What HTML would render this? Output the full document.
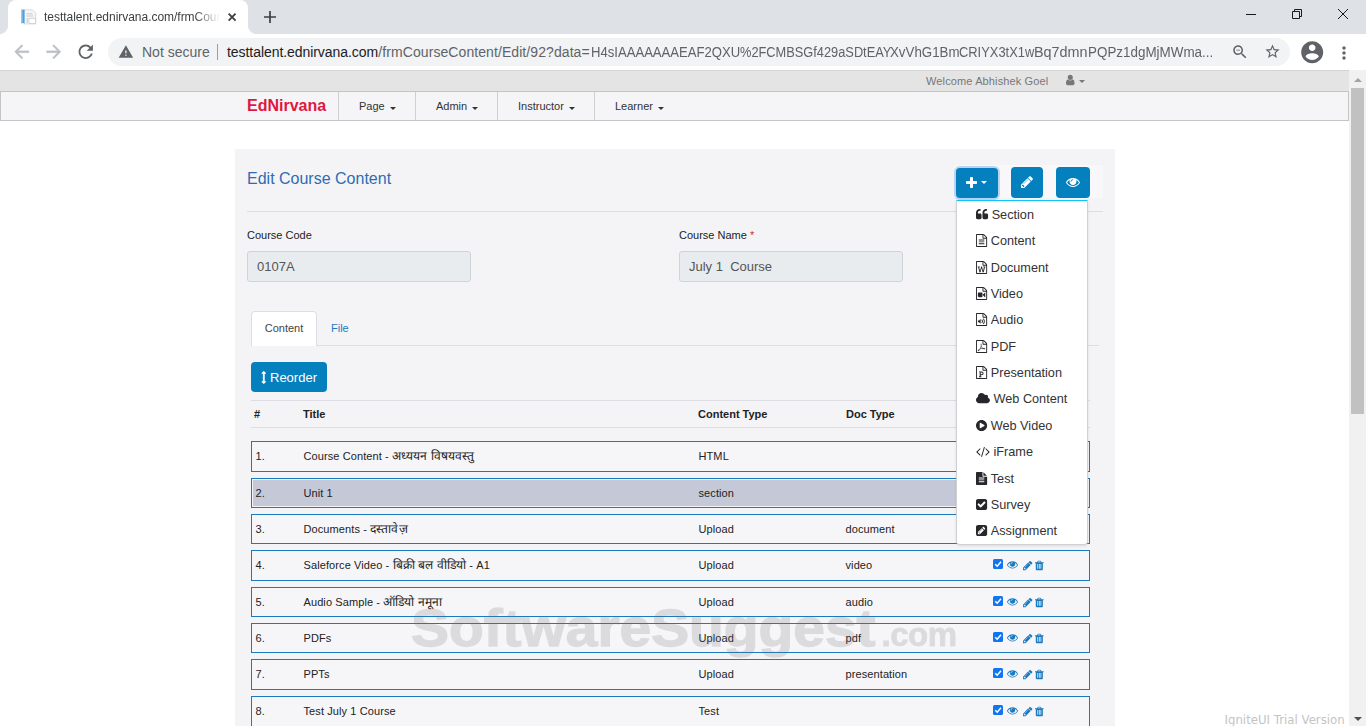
<!DOCTYPE html>
<html lang="en">
<head>
<meta charset="utf-8">
<title>testtalent.ednirvana.com/frmCourseContent</title>
<style>
*{box-sizing:border-box;margin:0;padding:0}
html,body{width:1366px;height:726px;overflow:hidden;background:#fff;font-family:"Liberation Sans",sans-serif;color:#222}
.abs{position:absolute}
svg{display:block;overflow:visible}
#tabstrip{position:absolute;left:0;top:0;width:1366px;height:34px;background:#dee1e6}
#tab{position:absolute;left:8px;top:0;width:240px;height:34px;background:#fff;border-radius:8px 8px 0 0}
#tab:before,#tab:after{content:"";position:absolute;bottom:0;width:8px;height:8px}
#tab:before{left:-8px;background:radial-gradient(circle at 0 0,#dee1e6 7.5px,#fff 8.2px)}
#tab:after{right:-8px;background:radial-gradient(circle at 100% 0,#dee1e6 7.5px,#fff 8.2px)}
#tabtitle{position:absolute;left:36px;top:9px;width:176px;height:17px;font-size:12px;line-height:17px;letter-spacing:-.03px;color:#3c4043;white-space:nowrap;overflow:hidden;-webkit-mask-image:linear-gradient(90deg,#000 150px,transparent 176px);mask-image:linear-gradient(90deg,#000 150px,transparent 176px)}
#toolbar{position:absolute;left:0;top:34px;width:1366px;height:36px;background:#fff}
#omni{position:absolute;left:108px;top:38px;width:1182px;height:28px;border-radius:14px;background:#f1f3f4}
#omni span{position:absolute;top:5px;font-size:14px;line-height:18px;color:#5f6368;white-space:nowrap}
#omni .sep{left:109px;top:6px;width:1px;height:16px;background:#9aa0a6}
#topbar{position:absolute;left:0;top:70px;width:1349px;height:21px;background:#e4e4e4;border-top:1px solid #d4d4d4}
#welcome{position:absolute;left:926px;top:4px;font-size:11px;line-height:13px;color:#777;white-space:nowrap;letter-spacing:.13px}
#navbar{position:absolute;left:0;top:91px;width:1349px;height:30px;background:#f5f5f7;border:1px solid #c4c4c4}
#brand{position:absolute;left:246px;top:5px;font-size:16px;line-height:18px;font-weight:bold;color:#e0173f;white-space:nowrap}
.nv{position:absolute;top:0;height:28px;border-left:1px solid #cfcfcf;font-size:11px;line-height:28px;color:#333;white-space:nowrap;padding-left:20px}
.caret{display:inline-block;width:0;height:0;border-left:3px solid transparent;border-right:3px solid transparent;border-top:3px solid currentColor;vertical-align:middle;margin-left:5px;position:relative;top:1px}
#scroll{position:absolute;left:1349px;top:70px;width:17px;height:656px;background:#f1f1f1}
#thumb{position:absolute;left:2px;top:18px;width:13px;height:326px;background:#c1c1c1}
.arr{position:absolute;left:5px;width:0;height:0;border-left:3.5px solid transparent;border-right:3.5px solid transparent}
#panel{position:absolute;left:235px;top:149px;width:880px;height:577px;background:#f4f4f7}
h1{position:absolute;left:12px;top:20px;font-size:16px;line-height:20px;font-weight:normal;color:#2d6cb2;white-space:nowrap}
.hr{position:absolute;left:12px;height:1px;background:#dddde3}
.lbl{position:absolute;font-size:11px;line-height:13px;color:#222;white-space:nowrap}
.inp{position:absolute;width:224px;height:31px;background:#e9ecef;border:1px solid #cfd4da;border-radius:3px;font-size:13px;line-height:30px;padding-left:9px;color:#555;white-space:pre}
.btn{position:absolute;background:#0480bf;border-radius:4px;color:#fff}
#btnstrip{position:absolute;left:719px;top:16px;width:149px;height:33px;background:#f8f8fa}
#tabc{position:absolute;left:16px;top:162px;width:66px;height:35px;background:#fff;border:1px solid #dddde3;border-bottom:none;border-radius:4px 4px 0 0;font-size:11px;line-height:32px;text-align:center;color:#444}
#tabf{position:absolute;left:96px;top:162px;font-size:11px;line-height:34px;color:#1a7ac0}
.th{position:absolute;top:259px;font-size:11px;line-height:13px;font-weight:bold;color:#222;white-space:nowrap}
.row{position:absolute;left:16px;width:839px;height:31px;border:1px solid #1a7ac0;background:#f6f6f9;font-size:11px;letter-spacing:.1px}
.row span{position:absolute;top:0;line-height:29px;white-space:nowrap;color:#222}
.row b{font-weight:normal;font-size:12.1px}
.row.sel{background:#c5c9d7;box-shadow:inset 0 0 0 1px #f4f4f7}
.c0{left:3.5px}.c1{left:51.5px}.c2{left:446.5px}.c3{left:593.5px}
.cb{position:absolute;width:10px;height:10px;background:#0f75f0;border-radius:1.5px}
#dd{position:absolute;left:956px;top:200px;width:132px;height:345px;background:#fff;border:1px solid #cfcfd4;border-top:1.5px solid #0dc3fb;border-radius:1px 1px 4px 4px;box-shadow:0 1px 3px rgba(0,0,0,.10)}
.it{position:absolute;font-size:12.7px;line-height:16px;color:#333;white-space:nowrap}
#wm,#wm2{position:absolute;left:410.5px;top:599px;font-weight:bold;color:#6c6c6e;opacity:.19;-webkit-text-stroke:1.3px #6c6c6e;white-space:nowrap;font-size:51px;line-height:60px;transform:scaleX(1.115);transform-origin:0 0}
#wm2{left:881.5px;top:609.5px;font-size:33px;line-height:50px;transform:none;-webkit-text-stroke:.8px #6c6c6e;letter-spacing:-.5px}
#trial{position:absolute;left:1224.5px;top:712.4px;font-family:"DejaVu Sans",sans-serif;font-size:11.75px;line-height:16px;color:#c4c4c4;white-space:nowrap}
</style>
</head>
<body>
<div id="tabstrip"><div id="tab">
<svg class="abs" style="left:12.5px;top:9px" width="16" height="16" viewBox="0 0 16 16"><path d="M3.5 .8h8l3.3 3.3v10.9H3.5z" fill="#f4f6f8" stroke="#c9ced4" stroke-width=".7"/><rect x=".3" y=".6" width="3.2" height="13.6" fill="#4a9fe0"/><rect x=".3" y=".6" width="1.2" height="13.6" fill="#9ccbf0"/><rect x="5.5" y="4.3" width="6" height="1" fill="#c5cad1"/><rect x="5.5" y="6.5" width="7" height="1" fill="#c5cad1"/><rect x="8" y="9.3" width="6.5" height="5" fill="#fff" stroke="#c0c6cd" stroke-width=".7"/><rect x="5.5" y="9" width="1.6" height="5" fill="#d5d9de"/></svg>
<div id="tabtitle">testtalent.ednirvana.com/frmCourseContent</div>
<svg class="abs" style="left:219.8px;top:13px" width="8.2" height="8.2" viewBox="0 0 9 9"><path d="M.7.7l7.6 7.6M8.3.7L.7 8.3" stroke="#3c4043" stroke-width="2" fill="none"/></svg>
</div>
<svg class="abs" style="left:264px;top:11px" width="12" height="12" viewBox="0 0 12 12"><path d="M6 0v12M0 6h12" stroke="#3c4043" stroke-width="1.7" fill="none"/></svg>
<svg class="abs" style="left:1246px;top:9px" width="10" height="10" viewBox="0 0 10 10"><path d="M0 5.5h10" stroke="#1a1a1a" stroke-width="1" fill="none"/></svg>
<svg class="abs" style="left:1292px;top:9px" width="10" height="10" viewBox="0 0 10 10"><path d="M.5 2.5h7v7h-7zM2.5 2.5v-2h7v7h-2" stroke="#1a1a1a" stroke-width="1" fill="none"/></svg>
<svg class="abs" style="left:1338px;top:9px" width="10" height="10" viewBox="0 0 10 10"><path d="M0 0l10 10M10 0L0 10" stroke="#1a1a1a" stroke-width="1" fill="none"/></svg>
</div>
<div id="toolbar"></div>
<svg class="abs" style="left:10.50px;top:40.70px" width="21.50" height="21.50" viewBox="0 0 24 24"><path fill="#bcc0c4" stroke="#bcc0c4" stroke-width="0.35" d="M20 11H7.83l5.59-5.59L12 4l-8 8 8 8 1.41-1.41L7.83 13H20v-2z"/></svg>
<svg class="abs" style="left:43.30px;top:40.70px" width="21.50" height="21.50" viewBox="0 0 24 24"><path fill="#bcc0c4" stroke="#bcc0c4" stroke-width="0.35" d="M12 4l-1.41 1.41L16.17 11H4v2h12.17l-5.58 5.59L12 20l8-8z"/></svg>
<svg class="abs" style="left:75.40px;top:41.20px" width="21.50" height="21.50" viewBox="0 0 24 24"><path fill="#5f6368" stroke="#5f6368" stroke-width="0" d="M17.65 6.35C16.2 4.9 14.21 4 12 4c-4.42 0-7.99 3.58-7.99 8s3.57 8 7.99 8c3.73 0 6.84-2.55 7.73-6h-2.08c-.82 2.33-3.04 4-5.65 4-3.31 0-6-2.69-6-6s2.69-6 6-6c1.66 0 3.14.69 4.22 1.78L13 11h7V4l-2.35 2.35z"/></svg>
<div id="omni">
<span style="left:34px">Not secure</span><i class="abs sep"></i>
<span id="u1" style="left:119px;color:#202124;letter-spacing:-.06px">testtalent.ednirvana.com</span><span id="u2" style="left:270.3px;letter-spacing:.08px">/frmCourseContent/Edit/92?data=</span><span style="left:482.80px;transform:scaleX(0.9354);transform-origin:0 0">H4sIAAAAAAAEAF2QXU</span><span style="left:632.00px;transform:scaleX(0.9147);transform-origin:0 0">%2FCMBSGf429aSDtEAY</span><span style="left:781.60px;transform:scaleX(0.9503);transform-origin:0 0">XvVhG1Bm</span><span style="left:851.10px;transform:scaleX(0.9205);transform-origin:0 0">CRIYX3tX1w</span><span style="left:926.30px;transform:scaleX(1.0260);transform-origin:0 0">Bq7dmn</span><span style="left:979.80px;transform:scaleX(0.9580);transform-origin:0 0">PQPz1dgMjMWma...</span>
</div>
<svg class="abs" style="left:118.00px;top:44.20px" width="15.80" height="15.80" viewBox="0 0 24 24"><path fill="#5f6368" stroke="#5f6368" stroke-width="0" d="M1 21h22L12 2 1 21zm12-3h-2v-2h2v2zm0-4h-2v-4h2v4z"/></svg>
<svg class="abs" style="left:1230.50px;top:42.60px" width="18.00" height="18.00" viewBox="0 0 24 24"><path fill="#5f6368" stroke="#5f6368" stroke-width="0" d="M15.5 14h-.79l-.28-.27C15.41 12.59 16 11.11 16 9.5 16 5.91 13.09 3 9.5 3S3 5.91 3 9.5 5.91 16 9.5 16c1.61 0 3.09-.59 4.23-1.57l.27.28v.79l5 4.99L20.49 19l-4.99-5zm-6 0C7.01 14 5 11.99 5 9.5S7.01 5 9.5 5 14 7.01 14 9.5 11.99 14 9.5 14zM7 9h5v1H7z"/></svg>
<svg class="abs" style="left:1263.50px;top:43.00px" width="17.00" height="17.00" viewBox="0 0 24 24"><path fill="#5f6368" stroke="#5f6368" stroke-width="0" d="M22 9.24l-7.19-.62L12 2 9.19 8.63 2 9.24l5.46 4.73L5.82 21 12 17.27 18.18 21l-1.63-7.03L22 9.24zM12 15.4l-3.76 2.27 1-4.28-3.32-2.88 4.38-.38L12 6.1l1.71 4.04 4.38.38-3.32 2.88 1 4.28L12 15.4z"/></svg>
<svg class="abs" style="left:1298.80px;top:38.80px" width="26.40" height="26.40" viewBox="0 0 24 24"><path fill="#5f6368" stroke="#5f6368" stroke-width="0" d="M12 2C6.48 2 2 6.48 2 12s4.48 10 10 10 10-4.48 10-10S17.52 2 12 2zm0 3c1.66 0 3 1.34 3 3s-1.34 3-3 3-3-1.34-3-3 1.34-3 3-3zm0 14.2c-2.5 0-4.71-1.28-6-3.22.03-1.99 4-3.08 6-3.08 1.99 0 5.97 1.09 6 3.08-1.29 1.94-3.5 3.22-6 3.22z"/></svg>
<svg class="abs" style="left:1334.30px;top:42.50px" width="20.00" height="20.00" viewBox="0 0 24 24"><path fill="#5f6368" stroke="#5f6368" stroke-width="0" d="M12 8c1.1 0 2-.9 2-2s-.9-2-2-2-2 .9-2 2 .9 2 2 2zm0 2c-1.1 0-2 .9-2 2s.9 2 2 2 2-.9 2-2-.9-2-2-2zm0 6c-1.1 0-2 .9-2 2s.9 2 2 2 2-.9 2-2-.9-2-2-2z"/></svg>
<div id="topbar"><div id="welcome">Welcome Abhishek Goel</div></div>
<svg class="abs" style="left:1065.60px;top:73.71px;" width="8.57" height="12.00" viewBox="0 -1536 1280 1792"><path fill="#777" transform="scale(1,-1)" d="M1280 137C1280 400 1215 704 953 704C872 625 762 576 640 576C518 576 408 625 327 704C65 704 0 400 0 137C0 -9 96 -128 213 -128H1067C1184 -128 1280 -9 1280 137ZM1024 1024C1024 1236 852 1408 640 1408C428 1408 256 1236 256 1024C256 812 428 640 640 640C852 640 1024 812 1024 1024Z"/></svg>
<i class="abs" style="left:1079px;top:80px;width:0;height:0;border-left:3.2px solid transparent;border-right:3.2px solid transparent;border-top:3.2px solid #777"></i>
<div id="navbar"><div id="brand">EdNirvana</div>
<div class="nv" style="left:337px">Page<i class="caret"></i></div>
<div class="nv" style="left:414px">Admin<i class="caret"></i></div>
<div class="nv" style="left:496px">Instructor<i class="caret"></i></div>
<div class="nv" style="left:593px">Learner<i class="caret"></i></div>
</div>
<div id="scroll"><i class="arr" style="left:4.5px;top:7.5px;border-width:0 4px 4px 4px;border-bottom:4px solid #a3a3a3"></i><div id="thumb"></div><i class="arr" style="left:4.5px;top:647px;border-width:4px 4px 0 4px;border-top:4px solid #505050"></i></div>
<div id="panel">
<h1>Edit Course Content</h1>
<div id="btnstrip"></div>
<div class="hr" style="top:62px;width:856px"></div>
<div class="lbl" style="left:12px;top:80px">Course Code</div>
<div class="inp" style="left:12px;top:102px">0107A</div>
<div class="lbl" style="left:444px;top:80px">Course Name <span style="color:#e0173f">*</span></div>
<div class="inp" style="left:444px;top:102px">July 1  Course</div>
<div class="btn" style="left:721px;top:19px;width:42px;height:30px;box-shadow:0 0 0 2px #b9d5f3"></div>
<div class="btn" style="left:776px;top:18px;width:32px;height:31px"></div>
<div class="btn" style="left:821px;top:18px;width:34px;height:31px"></div>
<div class="hr" style="left:16px;top:196px;width:848px"></div>
<div id="tabc">Content</div><div id="tabf">File</div>
<div class="btn" style="left:16px;top:213px;width:76px;height:30px;font-size:13px;line-height:31px;padding-left:19px">Reorder</div>
<div class="hr" style="left:16px;top:251px;width:839px"></div>
<div class="hr" style="left:16px;top:278px;width:839px"></div>
<div class="th" style="left:19px">#</div>
<div class="th" style="left:68px">Title</div>
<div class="th" style="left:463px">Content Type</div>
<div class="th" style="left:611px">Doc Type</div>
<div class="row" style="top:292px;height:31px"><span class="c0">1.</span><span class="c1">Course Content - <b lang="hi">अध्ययन विषयवस्तु</b></span><span class="c2">HTML</span><span class="c3"></span></div>
<div class="row sel" style="top:329px;height:30px"><span class="c0">2.</span><span class="c1">Unit 1</span><span class="c2">section</span><span class="c3"></span></div>
<div class="row" style="top:365px;height:30px"><span class="c0">3.</span><span class="c1">Documents - <b lang="hi">दस्तावेज़</b></span><span class="c2">Upload</span><span class="c3">document</span></div>
<div class="row" style="top:401px;height:31px"><span class="c0">4.</span><span class="c1">Saleforce Video - <b lang="hi">बिक्री बल वीडियो</b> - A1</span><span class="c2">Upload</span><span class="c3">video</span></div>
<div class="row" style="top:438px;height:30px"><span class="c0">5.</span><span class="c1">Audio Sample - <b lang="hi">ऑडियो नमूना</b></span><span class="c2">Upload</span><span class="c3">audio</span></div>
<div class="row" style="top:474px;height:30px"><span class="c0">6.</span><span class="c1">PDFs</span><span class="c2">Upload</span><span class="c3">pdf</span></div>
<div class="row" style="top:510px;height:31px"><span class="c0">7.</span><span class="c1">PPTs</span><span class="c2">Upload</span><span class="c3">presentation</span></div>
<div class="row" style="top:547px;height:31px"><span class="c0">8.</span><span class="c1">Test July 1 Course</span><span class="c2">Test</span><span class="c3"></span></div>
</div>
<svg class="abs" style="left:966.20px;top:176.00px;" width="11.00" height="14.00" viewBox="0 -1536 1408 1792"><path fill="#fff" transform="scale(1,-1)" d="M1408 800C1408 853 1365 896 1312 896H896V1312C896 1365 853 1408 800 1408H608C555 1408 512 1365 512 1312V896H96C43 896 0 853 0 800V608C0 555 43 512 96 512H512V96C512 43 555 0 608 0H800C853 0 896 43 896 96V512H1312C1365 512 1408 555 1408 608Z"/></svg>
<i class="abs" style="left:980.5px;top:181.3px;width:0;height:0;border-left:3.2px solid transparent;border-right:3.2px solid transparent;border-top:3px solid #fff"></i>
<svg class="abs" style="left:1020.80px;top:175.00px;" width="12.00" height="14.00" viewBox="0 -1536 1536 1792"><path fill="#fff" transform="scale(1,-1)" d="M363 0H256V128H128V235L219 326L454 91ZM886 928C886 922 884 916 879 911L337 369C332 364 326 362 320 362C307 362 298 371 298 384C298 390 300 396 305 401L847 943C852 948 858 950 864 950C877 950 886 941 886 928ZM832 1120 0 288V-128H416L1248 704ZM1515 1024C1515 1058 1501 1091 1478 1115L1243 1349C1219 1373 1186 1387 1152 1387C1118 1387 1085 1373 1062 1349L896 1184L1312 768L1478 934C1501 957 1515 990 1515 1024Z"/></svg>
<svg class="abs" style="left:1066.00px;top:174.80px;" width="14.00" height="14.00" viewBox="0 -1536 1792 1792"><path fill="#fff" transform="scale(1,-1)" d="M1664 576C1493 312 1217 128 896 128C575 128 299 312 128 576C223 723 353 849 509 929C469 861 448 783 448 704C448 457 649 256 896 256C1143 256 1344 457 1344 704C1344 783 1323 861 1283 929C1439 849 1569 723 1664 576ZM944 960C944 934 922 912 896 912C782 912 688 818 688 704C688 678 666 656 640 656C614 656 592 678 592 704C592 871 729 1008 896 1008C922 1008 944 986 944 960ZM1792 576C1792 601 1784 624 1772 645C1588 947 1251 1152 896 1152C541 1152 204 947 20 645C8 624 0 601 0 576C0 551 8 528 20 507C204 205 541 0 896 0C1251 0 1588 204 1772 507C1784 528 1792 551 1792 576Z"/></svg>
<svg class="abs" style="left:260.50px;top:370.66px;" width="5.57" height="13.00" viewBox="0 -1536 768 1792"><path fill="#fff" transform="scale(1,-1)" d="M704 1216C704 1233 697 1249 685 1261L429 1517C417 1529 401 1536 384 1536C367 1536 351 1529 339 1517L83 1261C71 1249 64 1233 64 1216C64 1181 93 1152 128 1152H256V128H128C93 128 64 99 64 64C64 47 71 31 83 19L339 -237C351 -249 367 -256 384 -256C401 -256 417 -249 429 -237L685 19C697 31 704 47 704 64C704 99 675 128 640 128H512V1152H640C675 1152 704 1181 704 1216Z"/></svg>
<i class="cb" style="left:993px;top:559px"><svg class="abs" style="left:1px;top:1px" width="8" height="8" viewBox="0 0 8 8"><path d="M1.2 4.2l2 2L7 1.8" stroke="#fff" stroke-width="1.5" fill="none"/></svg></i>
<svg class="abs" style="left:1006.80px;top:559.07px;" width="11.00" height="11.00" viewBox="0 -1536 1792 1792"><path fill="#1a7ac0" transform="scale(1,-1)" d="M1664 576C1493 312 1217 128 896 128C575 128 299 312 128 576C223 723 353 849 509 929C469 861 448 783 448 704C448 457 649 256 896 256C1143 256 1344 457 1344 704C1344 783 1323 861 1283 929C1439 849 1569 723 1664 576ZM944 960C944 934 922 912 896 912C782 912 688 818 688 704C688 678 666 656 640 656C614 656 592 678 592 704C592 871 729 1008 896 1008C922 1008 944 986 944 960ZM1792 576C1792 601 1784 624 1772 645C1588 947 1251 1152 896 1152C541 1152 204 947 20 645C8 624 0 601 0 576C0 551 8 528 20 507C204 205 541 0 896 0C1251 0 1588 204 1772 507C1784 528 1792 551 1792 576Z"/></svg>
<svg class="abs" style="left:1022.90px;top:559.57px;" width="9.43" height="11.00" viewBox="0 -1536 1536 1792"><path fill="#1a7ac0" transform="scale(1,-1)" d="M363 0H256V128H128V235L219 326L454 91ZM886 928C886 922 884 916 879 911L337 369C332 364 326 362 320 362C307 362 298 371 298 384C298 390 300 396 305 401L847 943C852 948 858 950 864 950C877 950 886 941 886 928ZM832 1120 0 288V-128H416L1248 704ZM1515 1024C1515 1058 1501 1091 1478 1115L1243 1349C1219 1373 1186 1387 1152 1387C1118 1387 1085 1373 1062 1349L896 1184L1312 768L1478 934C1501 957 1515 990 1515 1024Z"/></svg>
<svg class="abs" style="left:1035.30px;top:559.57px;" width="8.64" height="11.00" viewBox="0 -1536 1408 1792"><path fill="#1a7ac0" transform="scale(1,-1)" d="M512 160C512 142 498 128 480 128H416C398 128 384 142 384 160V864C384 882 398 896 416 896H480C498 896 512 882 512 864V160ZM768 160C768 142 754 128 736 128H672C654 128 640 142 640 160V864C640 882 654 896 672 896H736C754 896 768 882 768 864V160ZM1024 160C1024 142 1010 128 992 128H928C910 128 896 142 896 160V864C896 882 910 896 928 896H992C1010 896 1024 882 1024 864V160ZM480 1152 529 1269C532 1273 540 1279 546 1280H863C868 1279 877 1273 880 1269L928 1152ZM1408 1120C1408 1138 1394 1152 1376 1152H1067L997 1319C977 1368 917 1408 864 1408H544C491 1408 431 1368 411 1319L341 1152H32C14 1152 0 1138 0 1120V1056C0 1038 14 1024 32 1024H128V72C128 -38 200 -128 288 -128H1120C1208 -128 1280 -34 1280 76V1024H1376C1394 1024 1408 1038 1408 1056Z"/></svg>
<i class="cb" style="left:993px;top:596px"><svg class="abs" style="left:1px;top:1px" width="8" height="8" viewBox="0 0 8 8"><path d="M1.2 4.2l2 2L7 1.8" stroke="#fff" stroke-width="1.5" fill="none"/></svg></i>
<svg class="abs" style="left:1006.80px;top:596.07px;" width="11.00" height="11.00" viewBox="0 -1536 1792 1792"><path fill="#1a7ac0" transform="scale(1,-1)" d="M1664 576C1493 312 1217 128 896 128C575 128 299 312 128 576C223 723 353 849 509 929C469 861 448 783 448 704C448 457 649 256 896 256C1143 256 1344 457 1344 704C1344 783 1323 861 1283 929C1439 849 1569 723 1664 576ZM944 960C944 934 922 912 896 912C782 912 688 818 688 704C688 678 666 656 640 656C614 656 592 678 592 704C592 871 729 1008 896 1008C922 1008 944 986 944 960ZM1792 576C1792 601 1784 624 1772 645C1588 947 1251 1152 896 1152C541 1152 204 947 20 645C8 624 0 601 0 576C0 551 8 528 20 507C204 205 541 0 896 0C1251 0 1588 204 1772 507C1784 528 1792 551 1792 576Z"/></svg>
<svg class="abs" style="left:1022.90px;top:596.57px;" width="9.43" height="11.00" viewBox="0 -1536 1536 1792"><path fill="#1a7ac0" transform="scale(1,-1)" d="M363 0H256V128H128V235L219 326L454 91ZM886 928C886 922 884 916 879 911L337 369C332 364 326 362 320 362C307 362 298 371 298 384C298 390 300 396 305 401L847 943C852 948 858 950 864 950C877 950 886 941 886 928ZM832 1120 0 288V-128H416L1248 704ZM1515 1024C1515 1058 1501 1091 1478 1115L1243 1349C1219 1373 1186 1387 1152 1387C1118 1387 1085 1373 1062 1349L896 1184L1312 768L1478 934C1501 957 1515 990 1515 1024Z"/></svg>
<svg class="abs" style="left:1035.30px;top:596.57px;" width="8.64" height="11.00" viewBox="0 -1536 1408 1792"><path fill="#1a7ac0" transform="scale(1,-1)" d="M512 160C512 142 498 128 480 128H416C398 128 384 142 384 160V864C384 882 398 896 416 896H480C498 896 512 882 512 864V160ZM768 160C768 142 754 128 736 128H672C654 128 640 142 640 160V864C640 882 654 896 672 896H736C754 896 768 882 768 864V160ZM1024 160C1024 142 1010 128 992 128H928C910 128 896 142 896 160V864C896 882 910 896 928 896H992C1010 896 1024 882 1024 864V160ZM480 1152 529 1269C532 1273 540 1279 546 1280H863C868 1279 877 1273 880 1269L928 1152ZM1408 1120C1408 1138 1394 1152 1376 1152H1067L997 1319C977 1368 917 1408 864 1408H544C491 1408 431 1368 411 1319L341 1152H32C14 1152 0 1138 0 1120V1056C0 1038 14 1024 32 1024H128V72C128 -38 200 -128 288 -128H1120C1208 -128 1280 -34 1280 76V1024H1376C1394 1024 1408 1038 1408 1056Z"/></svg>
<i class="cb" style="left:993px;top:632px"><svg class="abs" style="left:1px;top:1px" width="8" height="8" viewBox="0 0 8 8"><path d="M1.2 4.2l2 2L7 1.8" stroke="#fff" stroke-width="1.5" fill="none"/></svg></i>
<svg class="abs" style="left:1006.80px;top:632.07px;" width="11.00" height="11.00" viewBox="0 -1536 1792 1792"><path fill="#1a7ac0" transform="scale(1,-1)" d="M1664 576C1493 312 1217 128 896 128C575 128 299 312 128 576C223 723 353 849 509 929C469 861 448 783 448 704C448 457 649 256 896 256C1143 256 1344 457 1344 704C1344 783 1323 861 1283 929C1439 849 1569 723 1664 576ZM944 960C944 934 922 912 896 912C782 912 688 818 688 704C688 678 666 656 640 656C614 656 592 678 592 704C592 871 729 1008 896 1008C922 1008 944 986 944 960ZM1792 576C1792 601 1784 624 1772 645C1588 947 1251 1152 896 1152C541 1152 204 947 20 645C8 624 0 601 0 576C0 551 8 528 20 507C204 205 541 0 896 0C1251 0 1588 204 1772 507C1784 528 1792 551 1792 576Z"/></svg>
<svg class="abs" style="left:1022.90px;top:632.57px;" width="9.43" height="11.00" viewBox="0 -1536 1536 1792"><path fill="#1a7ac0" transform="scale(1,-1)" d="M363 0H256V128H128V235L219 326L454 91ZM886 928C886 922 884 916 879 911L337 369C332 364 326 362 320 362C307 362 298 371 298 384C298 390 300 396 305 401L847 943C852 948 858 950 864 950C877 950 886 941 886 928ZM832 1120 0 288V-128H416L1248 704ZM1515 1024C1515 1058 1501 1091 1478 1115L1243 1349C1219 1373 1186 1387 1152 1387C1118 1387 1085 1373 1062 1349L896 1184L1312 768L1478 934C1501 957 1515 990 1515 1024Z"/></svg>
<svg class="abs" style="left:1035.30px;top:632.57px;" width="8.64" height="11.00" viewBox="0 -1536 1408 1792"><path fill="#1a7ac0" transform="scale(1,-1)" d="M512 160C512 142 498 128 480 128H416C398 128 384 142 384 160V864C384 882 398 896 416 896H480C498 896 512 882 512 864V160ZM768 160C768 142 754 128 736 128H672C654 128 640 142 640 160V864C640 882 654 896 672 896H736C754 896 768 882 768 864V160ZM1024 160C1024 142 1010 128 992 128H928C910 128 896 142 896 160V864C896 882 910 896 928 896H992C1010 896 1024 882 1024 864V160ZM480 1152 529 1269C532 1273 540 1279 546 1280H863C868 1279 877 1273 880 1269L928 1152ZM1408 1120C1408 1138 1394 1152 1376 1152H1067L997 1319C977 1368 917 1408 864 1408H544C491 1408 431 1368 411 1319L341 1152H32C14 1152 0 1138 0 1120V1056C0 1038 14 1024 32 1024H128V72C128 -38 200 -128 288 -128H1120C1208 -128 1280 -34 1280 76V1024H1376C1394 1024 1408 1038 1408 1056Z"/></svg>
<i class="cb" style="left:993px;top:668px"><svg class="abs" style="left:1px;top:1px" width="8" height="8" viewBox="0 0 8 8"><path d="M1.2 4.2l2 2L7 1.8" stroke="#fff" stroke-width="1.5" fill="none"/></svg></i>
<svg class="abs" style="left:1006.80px;top:668.07px;" width="11.00" height="11.00" viewBox="0 -1536 1792 1792"><path fill="#1a7ac0" transform="scale(1,-1)" d="M1664 576C1493 312 1217 128 896 128C575 128 299 312 128 576C223 723 353 849 509 929C469 861 448 783 448 704C448 457 649 256 896 256C1143 256 1344 457 1344 704C1344 783 1323 861 1283 929C1439 849 1569 723 1664 576ZM944 960C944 934 922 912 896 912C782 912 688 818 688 704C688 678 666 656 640 656C614 656 592 678 592 704C592 871 729 1008 896 1008C922 1008 944 986 944 960ZM1792 576C1792 601 1784 624 1772 645C1588 947 1251 1152 896 1152C541 1152 204 947 20 645C8 624 0 601 0 576C0 551 8 528 20 507C204 205 541 0 896 0C1251 0 1588 204 1772 507C1784 528 1792 551 1792 576Z"/></svg>
<svg class="abs" style="left:1022.90px;top:668.57px;" width="9.43" height="11.00" viewBox="0 -1536 1536 1792"><path fill="#1a7ac0" transform="scale(1,-1)" d="M363 0H256V128H128V235L219 326L454 91ZM886 928C886 922 884 916 879 911L337 369C332 364 326 362 320 362C307 362 298 371 298 384C298 390 300 396 305 401L847 943C852 948 858 950 864 950C877 950 886 941 886 928ZM832 1120 0 288V-128H416L1248 704ZM1515 1024C1515 1058 1501 1091 1478 1115L1243 1349C1219 1373 1186 1387 1152 1387C1118 1387 1085 1373 1062 1349L896 1184L1312 768L1478 934C1501 957 1515 990 1515 1024Z"/></svg>
<svg class="abs" style="left:1035.30px;top:668.57px;" width="8.64" height="11.00" viewBox="0 -1536 1408 1792"><path fill="#1a7ac0" transform="scale(1,-1)" d="M512 160C512 142 498 128 480 128H416C398 128 384 142 384 160V864C384 882 398 896 416 896H480C498 896 512 882 512 864V160ZM768 160C768 142 754 128 736 128H672C654 128 640 142 640 160V864C640 882 654 896 672 896H736C754 896 768 882 768 864V160ZM1024 160C1024 142 1010 128 992 128H928C910 128 896 142 896 160V864C896 882 910 896 928 896H992C1010 896 1024 882 1024 864V160ZM480 1152 529 1269C532 1273 540 1279 546 1280H863C868 1279 877 1273 880 1269L928 1152ZM1408 1120C1408 1138 1394 1152 1376 1152H1067L997 1319C977 1368 917 1408 864 1408H544C491 1408 431 1368 411 1319L341 1152H32C14 1152 0 1138 0 1120V1056C0 1038 14 1024 32 1024H128V72C128 -38 200 -128 288 -128H1120C1208 -128 1280 -34 1280 76V1024H1376C1394 1024 1408 1038 1408 1056Z"/></svg>
<i class="cb" style="left:993px;top:705px"><svg class="abs" style="left:1px;top:1px" width="8" height="8" viewBox="0 0 8 8"><path d="M1.2 4.2l2 2L7 1.8" stroke="#fff" stroke-width="1.5" fill="none"/></svg></i>
<svg class="abs" style="left:1006.80px;top:705.07px;" width="11.00" height="11.00" viewBox="0 -1536 1792 1792"><path fill="#1a7ac0" transform="scale(1,-1)" d="M1664 576C1493 312 1217 128 896 128C575 128 299 312 128 576C223 723 353 849 509 929C469 861 448 783 448 704C448 457 649 256 896 256C1143 256 1344 457 1344 704C1344 783 1323 861 1283 929C1439 849 1569 723 1664 576ZM944 960C944 934 922 912 896 912C782 912 688 818 688 704C688 678 666 656 640 656C614 656 592 678 592 704C592 871 729 1008 896 1008C922 1008 944 986 944 960ZM1792 576C1792 601 1784 624 1772 645C1588 947 1251 1152 896 1152C541 1152 204 947 20 645C8 624 0 601 0 576C0 551 8 528 20 507C204 205 541 0 896 0C1251 0 1588 204 1772 507C1784 528 1792 551 1792 576Z"/></svg>
<svg class="abs" style="left:1022.90px;top:705.57px;" width="9.43" height="11.00" viewBox="0 -1536 1536 1792"><path fill="#1a7ac0" transform="scale(1,-1)" d="M363 0H256V128H128V235L219 326L454 91ZM886 928C886 922 884 916 879 911L337 369C332 364 326 362 320 362C307 362 298 371 298 384C298 390 300 396 305 401L847 943C852 948 858 950 864 950C877 950 886 941 886 928ZM832 1120 0 288V-128H416L1248 704ZM1515 1024C1515 1058 1501 1091 1478 1115L1243 1349C1219 1373 1186 1387 1152 1387C1118 1387 1085 1373 1062 1349L896 1184L1312 768L1478 934C1501 957 1515 990 1515 1024Z"/></svg>
<svg class="abs" style="left:1035.30px;top:705.57px;" width="8.64" height="11.00" viewBox="0 -1536 1408 1792"><path fill="#1a7ac0" transform="scale(1,-1)" d="M512 160C512 142 498 128 480 128H416C398 128 384 142 384 160V864C384 882 398 896 416 896H480C498 896 512 882 512 864V160ZM768 160C768 142 754 128 736 128H672C654 128 640 142 640 160V864C640 882 654 896 672 896H736C754 896 768 882 768 864V160ZM1024 160C1024 142 1010 128 992 128H928C910 128 896 142 896 160V864C896 882 910 896 928 896H992C1010 896 1024 882 1024 864V160ZM480 1152 529 1269C532 1273 540 1279 546 1280H863C868 1279 877 1273 880 1269L928 1152ZM1408 1120C1408 1138 1394 1152 1376 1152H1067L997 1319C977 1368 917 1408 864 1408H544C491 1408 431 1368 411 1319L341 1152H32C14 1152 0 1138 0 1120V1056C0 1038 14 1024 32 1024H128V72C128 -38 200 -128 288 -128H1120C1208 -128 1280 -34 1280 76V1024H1376C1394 1024 1408 1038 1408 1056Z"/></svg>
<div id="wm">SoftwareSuggest</div><div id="wm2">.com</div>
<div id="dd"></div>
<svg class="abs" style="left:976.00px;top:207.86px;" width="12.07" height="13.00" viewBox="0 -1536 1664 1792"><path fill="#26262b" transform="scale(1,-1)" d="M768 576C768 682 682 768 576 768H352C299 768 256 811 256 864V896C256 1037 371 1152 512 1152H576C611 1152 640 1181 640 1216V1344C640 1379 611 1408 576 1408H512C230 1408 0 1178 0 896V192C0 86 86 0 192 0H576C682 0 768 86 768 192ZM1664 576C1664 682 1578 768 1472 768H1248C1195 768 1152 811 1152 864V896C1152 1037 1267 1152 1408 1152H1472C1507 1152 1536 1181 1536 1216V1344C1536 1379 1507 1408 1472 1408H1408C1126 1408 896 1178 896 896V192C896 86 982 0 1088 0H1472C1578 0 1664 86 1664 192Z"/></svg>
<div class="it" style="left:991.67px;top:207.00px">Section</div>
<svg class="abs" style="left:976.00px;top:233.86px;" width="11.14" height="13.00" viewBox="0 -1536 1536 1792"><path fill="#26262b" transform="scale(1,-1)" d="M1468 1156 1156 1468C1119 1505 1045 1536 992 1536H96C43 1536 0 1493 0 1440V-160C0 -213 43 -256 96 -256H1440C1493 -256 1536 -213 1536 -160V992C1536 1045 1505 1119 1468 1156ZM1024 1400C1041 1394 1058 1385 1065 1378L1378 1065C1385 1058 1394 1041 1400 1024H1024ZM1408 -128H128V1408H896V992C896 939 939 896 992 896H1408ZM384 736V672C384 654 398 640 416 640H1120C1138 640 1152 654 1152 672V736C1152 754 1138 768 1120 768H416C398 768 384 754 384 736ZM1120 512H416C398 512 384 498 384 480V416C384 398 398 384 416 384H1120C1138 384 1152 398 1152 416V480C1152 498 1138 512 1120 512ZM1120 256H416C398 256 384 242 384 224V160C384 142 398 128 416 128H1120C1138 128 1152 142 1152 160V224C1152 242 1138 256 1120 256Z"/></svg>
<div class="it" style="left:990.74px;top:233.00px">Content</div>
<svg class="abs" style="left:976.00px;top:260.86px;" width="11.14" height="13.00" viewBox="0 -1536 1536 1792"><path fill="#26262b" transform="scale(1,-1)" d="M1468 1156 1156 1468C1119 1505 1045 1536 992 1536H96C43 1536 0 1493 0 1440V-160C0 -213 43 -256 96 -256H1440C1493 -256 1536 -213 1536 -160V992C1536 1045 1505 1119 1468 1156ZM1024 1400C1041 1394 1058 1385 1065 1378L1378 1065C1385 1058 1394 1041 1400 1024H1024ZM1408 -128H128V1408H896V992C896 939 939 896 992 896H1408ZM233 768H533V661H443L542 223C546 207 548 190 549 177L551 156H555L559 177C562 190 563 207 567 223L711 768H825L969 223C973 207 975 190 978 177C979 170 981 162 981 156H985L987 177C988 190 990 207 994 223L1093 661H1003V768H1303V661H1233L1069 0H910L782 485C777 501 776 517 773 531L770 555H766C766 547 765 539 764 531C762 515 759 500 754 485L626 0H467L303 661H233Z"/></svg>
<div class="it" style="left:990.74px;top:260.00px">Document</div>
<svg class="abs" style="left:976.00px;top:286.86px;" width="11.14" height="13.00" viewBox="0 -1536 1536 1792"><path fill="#26262b" transform="scale(1,-1)" d="M1468 1156 1156 1468C1119 1505 1045 1536 992 1536H96C43 1536 0 1493 0 1440V-160C0 -213 43 -256 96 -256H1440C1493 -256 1536 -213 1536 -160V992C1536 1045 1505 1119 1468 1156ZM1024 1400C1041 1394 1058 1385 1065 1378L1378 1065C1385 1058 1394 1041 1400 1024H1024ZM1408 -128H128V1408H896V992C896 939 939 896 992 896H1408ZM768 768H384C314 768 256 710 256 640V256C256 186 314 128 384 128H768C838 128 896 186 896 256V640C896 710 838 768 768 768ZM1260 766C1256 767 1252 768 1248 768C1240 768 1231 765 1225 759L960 493V403L1225 137C1231 131 1240 128 1248 128C1252 128 1256 129 1260 130C1272 135 1280 147 1280 160V736C1280 749 1272 761 1260 766Z"/></svg>
<div class="it" style="left:990.74px;top:286.00px">Video</div>
<svg class="abs" style="left:976.00px;top:312.86px;" width="11.14" height="13.00" viewBox="0 -1536 1536 1792"><path fill="#26262b" transform="scale(1,-1)" d="M1468 1156 1156 1468C1119 1505 1045 1536 992 1536H96C43 1536 0 1493 0 1440V-160C0 -213 43 -256 96 -256H1440C1493 -256 1536 -213 1536 -160V992C1536 1045 1505 1119 1468 1156ZM1024 1400C1041 1394 1058 1385 1065 1378L1378 1065C1385 1058 1394 1041 1400 1024H1024ZM1408 -128H128V1408H896V992C896 939 939 896 992 896H1408ZM620 686C608 691 595 688 585 679L419 512H288C270 512 256 498 256 480V288C256 270 270 256 288 256H419L585 89C592 83 600 80 608 80C612 80 616 81 620 82C632 87 640 99 640 112V656C640 669 632 681 620 686ZM1037 -3C1023 -3 1009 2 997 12C969 34 965 74 988 102C1053 182 1088 280 1088 384C1088 488 1053 586 988 666C965 694 969 734 997 757C1024 779 1065 775 1087 747C1170 645 1216 516 1216 384C1216 252 1170 123 1087 21C1074 5 1056 -3 1037 -3ZM826 145C811 145 795 151 782 162C757 186 755 227 780 253C813 289 832 335 832 384C832 433 813 479 780 515C755 541 757 582 782 606C808 630 849 629 873 603C929 543 960 466 960 384C960 302 929 225 873 165C860 152 843 145 826 145Z"/></svg>
<div class="it" style="left:990.74px;top:312.00px">Audio</div>
<svg class="abs" style="left:976.00px;top:339.86px;" width="11.14" height="13.00" viewBox="0 -1536 1536 1792"><path fill="#26262b" transform="scale(1,-1)" d="M1468 1156 1156 1468C1119 1505 1045 1536 992 1536H96C43 1536 0 1493 0 1440V-160C0 -213 43 -256 96 -256H1440C1493 -256 1536 -213 1536 -160V992C1536 1045 1505 1119 1468 1156ZM1024 1400C1041 1394 1058 1385 1065 1378L1378 1065C1385 1058 1394 1041 1400 1024H1024ZM1408 -128H128V1408H896V992C896 939 939 896 992 896H1408ZM894 465C835 513 783 598 748 703C760 772 761 832 762 895C762 905 762 915 762 925C762 928 762 930 761 933C763 935 764 938 765 941C771 973 768 995 756 1009C748 1019 736 1024 721 1024H720H699C679 1024 664 1009 657 984C639 918 649 806 681 697C657 613 622 525 577 435C537 354 501 289 470 238C470 239 469 241 468 242C463 250 453 253 445 248C321 183 267 106 257 60C254 40 258 29 263 24C265 22 266 20 269 19L293 7C302 2 311 0 321 0C381 0 460 86 563 262C670 299 816 330 955 345C1039 301 1136 272 1200 272C1253 272 1268 292 1271 310C1271 310 1271 311 1271 311C1272 312 1273 314 1274 315C1285 339 1279 357 1272 367C1247 408 1162 416 1095 416C1059 416 1020 414 978 409C947 427 919 445 894 465ZM318 54C333 88 380 154 455 212C391 111 348 68 318 54ZM716 974C716 975 717 976 717 978C723 971 729 960 730 942C731 940 731 938 732 937C730 934 729 932 728 929C726 917 723 903 721 886C719 873 717 858 714 842C706 898 706 946 716 974ZM592 313C607 340 622 368 637 396C673 467 701 532 720 593C754 520 798 460 847 417C856 409 866 402 876 394C778 376 680 348 592 313ZM1238 329C1239 328 1240 327 1240 326C1236 325 1231 325 1222 325C1192 325 1147 335 1098 353C1207 353 1233 334 1238 329Z"/></svg>
<div class="it" style="left:990.74px;top:339.00px">PDF</div>
<svg class="abs" style="left:976.00px;top:365.86px;" width="11.14" height="13.00" viewBox="0 -1536 1536 1792"><path fill="#26262b" transform="scale(1,-1)" d="M1468 1156 1156 1468C1119 1505 1045 1536 992 1536H96C43 1536 0 1493 0 1440V-160C0 -213 43 -256 96 -256H1440C1493 -256 1536 -213 1536 -160V992C1536 1045 1505 1119 1468 1156ZM1024 1400C1041 1394 1058 1385 1065 1378L1378 1065C1385 1058 1394 1041 1400 1024H1024ZM1408 -128H128V1408H896V992C896 939 939 896 992 896H1408ZM416 106H508V661H416V768H784C830 768 876 764 914 749C997 714 1051 630 1051 521C1051 412 995 319 905 288C869 275 830 273 787 273H650V106H743V0H416ZM769 386C800 386 826 391 847 401C889 422 909 465 909 521C909 574 889 615 853 636C832 648 805 654 770 654H650V386Z"/></svg>
<div class="it" style="left:990.74px;top:365.00px">Presentation</div>
<svg class="abs" style="left:976.00px;top:391.86px;" width="13.93" height="13.00" viewBox="0 -1536 1920 1792"><path fill="#26262b" transform="scale(1,-1)" d="M1920 384C1920 566 1793 718 1623 758C1649 798 1664 845 1664 896C1664 1037 1549 1152 1408 1152C1344 1152 1286 1129 1242 1090C1165 1277 982 1408 768 1408C485 1408 256 1179 256 896C256 882 257 867 258 853C106 782 0 627 0 448C0 201 201 0 448 0H1536C1748 0 1920 172 1920 384Z"/></svg>
<div class="it" style="left:993.53px;top:391.00px">Web Content</div>
<svg class="abs" style="left:976.00px;top:418.86px;" width="11.14" height="13.00" viewBox="0 -1536 1536 1792"><path fill="#26262b" transform="scale(1,-1)" d="M768 1408C344 1408 0 1064 0 640C0 216 344 -128 768 -128C1192 -128 1536 216 1536 640C1536 1064 1192 1408 768 1408ZM1152 585 608 265C598 259 587 256 576 256C565 256 554 259 544 264C524 276 512 297 512 320V960C512 983 524 1004 544 1016C564 1027 589 1027 608 1015L1152 695C1172 684 1184 663 1184 640C1184 617 1172 596 1152 585Z"/></svg>
<div class="it" style="left:990.74px;top:418.00px">Web Video</div>
<svg class="abs" style="left:976.00px;top:444.86px;" width="13.93" height="13.00" viewBox="0 -1536 1920 1792"><path fill="#26262b" transform="scale(1,-1)" d="M617 137C630 150 630 170 617 183L224 576L617 969C630 982 630 1002 617 1015L567 1065C554 1078 534 1078 521 1065L55 599C42 586 42 566 55 553L521 87C534 74 554 74 567 87L617 137ZM1208 1204C1213 1221 1203 1239 1186 1244L1124 1261C1108 1266 1090 1256 1085 1239L712 -52C707 -69 717 -87 734 -92L796 -109C812 -114 830 -104 835 -87L1208 1204ZM1865 553C1878 566 1878 586 1865 599L1399 1065C1386 1078 1366 1078 1353 1065L1303 1015C1290 1002 1290 982 1303 969L1696 576L1303 183C1290 170 1290 150 1303 137L1353 87C1366 74 1386 74 1399 87L1865 553Z"/></svg>
<div class="it" style="left:993.53px;top:444.00px">iFrame</div>
<svg class="abs" style="left:976.00px;top:471.86px;" width="11.14" height="13.00" viewBox="0 -1536 1536 1792"><path fill="#26262b" transform="scale(1,-1)" d="M1468 1060 1060 1468C1050 1478 1038 1487 1024 1496V1024H1496C1487 1038 1478 1050 1468 1060ZM992 896C939 896 896 939 896 992V1536H96C43 1536 0 1493 0 1440V-160C0 -213 43 -256 96 -256H1440C1493 -256 1536 -213 1536 -160V896ZM1152 160C1152 142 1138 128 1120 128H416C398 128 384 142 384 160V224C384 242 398 256 416 256H1120C1138 256 1152 242 1152 224ZM1152 416C1152 398 1138 384 1120 384H416C398 384 384 398 384 416V480C384 498 398 512 416 512H1120C1138 512 1152 498 1152 480ZM1152 672C1152 654 1138 640 1120 640H416C398 640 384 654 384 672V736C384 754 398 768 416 768H1120C1138 768 1152 754 1152 736Z"/></svg>
<div class="it" style="left:990.74px;top:471.00px">Test</div>
<svg class="abs" style="left:976.00px;top:497.86px;" width="11.14" height="13.00" viewBox="0 -1536 1536 1792"><path fill="#26262b" transform="scale(1,-1)" d="M685 237C660 212 620 212 595 237L237 595C212 620 212 660 237 685L339 787C364 812 404 812 429 787L640 576L1107 1043C1132 1068 1172 1068 1197 1043L1299 941C1324 916 1324 876 1299 851ZM1536 1120C1536 1279 1407 1408 1248 1408H288C129 1408 0 1279 0 1120V160C0 1 129 -128 288 -128H1248C1407 -128 1536 1 1536 160Z"/></svg>
<div class="it" style="left:990.74px;top:497.00px">Survey</div>
<svg class="abs" style="left:976.00px;top:523.86px;" width="11.14" height="13.00" viewBox="0 -1536 1536 1792"><path fill="#26262b" transform="scale(1,-1)" d="M404 428 352 376V320H448V224H504L556 276ZM818 818C811 826 797 824 788 815L497 524C488 515 486 501 494 494C501 486 515 488 524 497L815 788C824 797 826 811 818 818ZM544 128H256V416L800 960L1088 672ZM1152 736 864 1024 956 1116C993 1153 1055 1153 1092 1116L1244 964C1281 927 1281 865 1244 828ZM1536 1120C1536 1279 1407 1408 1248 1408H288C129 1408 0 1279 0 1120V160C0 1 129 -128 288 -128H1248C1407 -128 1536 1 1536 160Z"/></svg>
<div class="it" style="left:990.74px;top:523.00px">Assignment</div>
<div id="trial">IgniteUI Trial Version</div>
</body>
</html>
